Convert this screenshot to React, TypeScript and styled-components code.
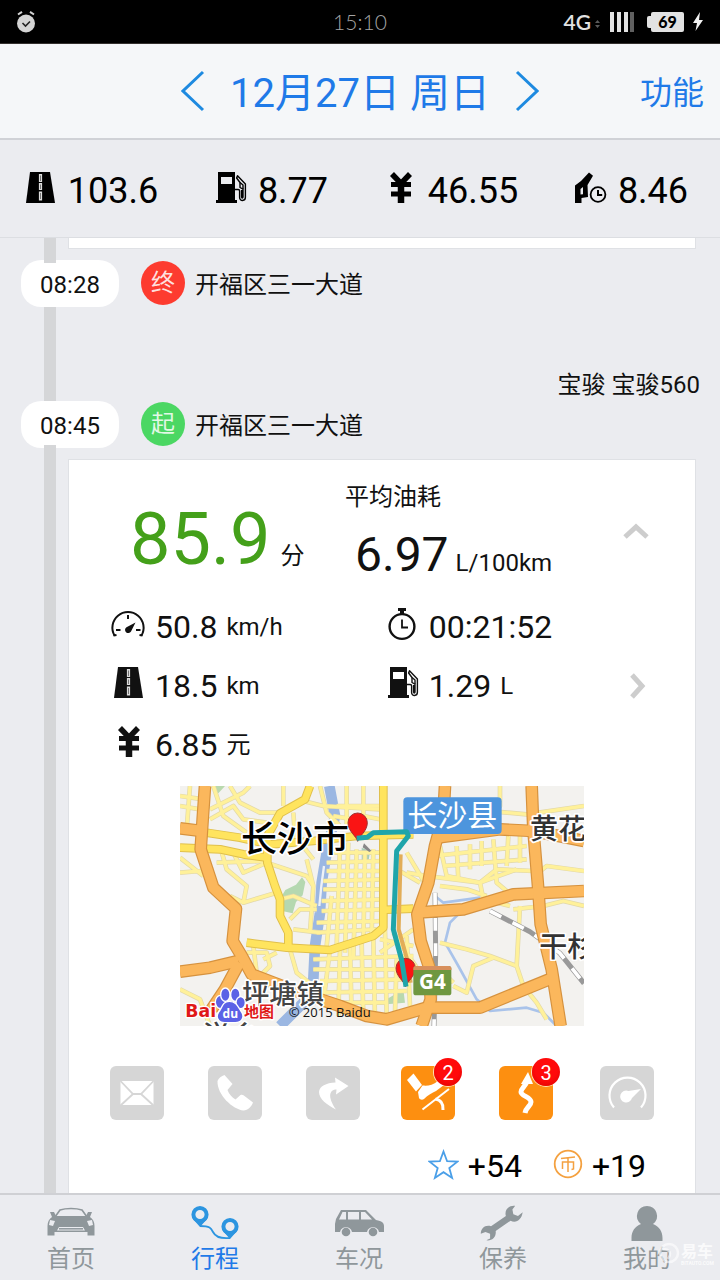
import React from "react";
import styled, { createGlobalStyle } from "styled-components";

const GlobalStyle = createGlobalStyle`
  *, *::before, *::after { box-sizing: border-box; }
  body {
    margin: 0;
    background: #ebecf0;
    color: #111;
    font-family: Roboto, "Noto Sans CJK SC", sans-serif;
    font-size: 24px;
    line-height: 28px;
  }
  button { font: inherit; color: inherit; background: none; border: 0; padding: 0; cursor: pointer; }
  a { color: inherit; text-decoration: none; }
  svg { display: block; flex: none; }
  h1, p { margin: 0; font-weight: 400; }
`;

const Page = styled.div`
  display: flex;
  flex-direction: column;
  min-height: 100vh;
`;

/* ---------- status bar ---------- */

const StatusBar = styled.div`
  display: grid;
  grid-template-columns: 1fr auto 1fr;
  align-items: center;
  height: 44px;
  padding: 0 16px;
  background: #000;
  border-bottom: 1px solid #34302e;
  color: #e2e2e2;
  font-family: Lato, sans-serif;
`;

const Clock = styled.span`
  font-size: 21px;
  font-weight: 300;
  color: #a4a4a4;
`;

const StatusIcons = styled.div`
  display: flex;
  align-items: center;
  justify-content: flex-end;
`;

const Network = styled.span`
  font-size: 21px;
  font-weight: 600;
  margin-right: 4px;
`;

const BatteryTip = styled.span`
  width: 4px;
  height: 12px;
  margin-left: 12px;
  border-radius: 2px 0 0 2px;
  background: #e2e2e2;
`;

const Battery = styled.span`
  height: 20px;
  width: 33px;
  margin-right: 8px;
  border-radius: 2px;
  background: #e2e2e2;
  color: #000;
  font-size: 16px;
  font-weight: 900;
  line-height: 20px;
  text-align: center;
`;

/* ---------- header ---------- */

const Header = styled.header`
  display: grid;
  grid-template-columns: 1fr auto 1fr;
  align-items: center;
  height: 96px;
  padding: 0 16px;
  background: #f5f7f9;
  border-bottom: 2px solid #d0d2d7;
  color: #1f7ae8;
`;

const DateNav = styled.div`
  grid-column: 2;
  display: flex;
  align-items: center;
  gap: 25px;
`;

const DateTitle = styled.h1`
  padding-top: 6px;
  font-size: 40px;
  line-height: 48px;
`;

const MenuButton = styled.button`
  justify-self: end;
  padding-top: 4px;
  font-size: 32px;
  line-height: 40px;
`;

/* ---------- day totals ---------- */

const Totals = styled.section`
  display: grid;
  grid-template-columns: repeat(4, 1fr);
  height: 98px;
  padding-top: 4px;
  border-bottom: 1px solid #dcdee2;
  color: #000;
`;

const Total = styled.div`
  display: flex;
  align-items: center;
  justify-content: center;
  gap: 10px;
  font-size: 36px;
  line-height: 40px;
`;

/* ---------- timeline ---------- */

const Timeline = styled.main`
  flex: 1;
  display: flex;
  flex-direction: column;
  background: linear-gradient(#d5d6d8, #d5d6d8) 44px 0 / 12px 100% no-repeat;
`;

const Card = styled.article`
  margin: 0 24px 0 68px;
  background: #fff;
  border: 1px solid #dfe1e5;
`;

const PreviousCard = styled(Card)`
  height: 11px;
  margin-bottom: 11px;
  border-top: 0;
`;

const TripCard = styled(Card)`
  flex: 1;
  margin-top: 11px;
  border-bottom: 0;
`;

const Stop = styled.div`
  display: flex;
  align-items: center;
  padding: 0 21px;
`;

const Time = styled.time<{ $edge: "top" | "bottom" }>`
  width: 98px;
  height: 47px;
  border-radius: 20px;
  background: linear-gradient(#d5d6d8, #d5d6d8) 23px ${(p) => p.$edge} / 12px 3px no-repeat #fff;
  line-height: 50px;
  text-align: center;
`;

const StopBadge = styled.span<{ $color: string }>`
  width: 44px;
  height: 44px;
  margin: 0 10px 2px 22px;
  border-radius: 50%;
  background: ${(p) => p.$color};
  color: #ffffffd9;
  line-height: 44px;
  text-align: center;
`;

const StopName = styled.span`
  padding-top: 2px;
`;

const CarName = styled.p`
  margin: 64px 20px 2px;
  text-align: right;
`;

/* ---------- trip card ---------- */

const Summary = styled.div`
  display: grid;
  grid-template-columns: 235fr 267fr 48px;
  height: 137px;
  padding: 0 35px 0 41px;
`;

const Score = styled.div`
  display: flex;
  align-items: baseline;
  gap: 10px;
  padding: 44px 0 0 20px;
`;

const ScoreValue = styled.strong`
  font-size: 72px;
  line-height: 72px;
  font-weight: 400;
  color: #44a01a;
`;

const Average = styled.div`
  padding-top: 23px;
`;

const AverageValue = styled.div`
  display: flex;
  align-items: baseline;
  gap: 7px;
  margin-top: 16px;
  padding-left: 10px;
`;

const AverageNumber = styled.span`
  font-size: 48px;
  line-height: 56px;
`;

const Metrics = styled.div`
  display: grid;
  grid-template-columns: 6fr 5fr 48px;
  grid-auto-rows: 59px;
  align-items: center;
  padding: 0 35px 0 41px;
`;

const Metric = styled.div<{ $column: number }>`
  grid-column: ${(p) => p.$column};
  display: flex;
  align-items: center;
  gap: 9px;
`;

const MetricText = styled.span`
  display: flex;
  align-items: center;
  gap: 9px;
`;

const MetricValue = styled.span`
  font-size: 32px;
  line-height: 40px;
`;

const ChevronButton = styled.button<{ $top?: number }>`
  grid-column: 3;
  display: grid;
  place-items: center;
  width: 48px;
  height: 48px;
  margin-top: ${(p) => p.$top ?? 0}px;
`;

const MapFrame = styled.figure`
  margin: 12px auto 0;
  width: 404px;
  max-width: 100%;
`;

const Actions = styled.div`
  display: grid;
  grid-template-columns: repeat(6, 1fr);
  justify-items: center;
  margin: 40px 19px 0;
`;

const ActionButton = styled.button<{ $alert?: boolean }>`
  position: relative;
  width: ${(p) => (p.$alert ? 60 : 54)}px;
  height: 54px;
`;

const Tile = styled.span<{ $alert?: boolean }>`
  display: grid;
  place-items: center;
  width: 54px;
  height: 54px;
  border-radius: 6px;
  background: ${(p) => (p.$alert ? "#fd8f10" : "#d6d6d6")};
`;

const Count = styled.span`
  position: absolute;
  top: -8px;
  right: -1px;
  width: 28px;
  height: 28px;
  border-radius: 50%;
  background: radial-gradient(circle at 50% 40%, #ff0a0a 50%, #d80000);
  box-shadow: 0 0 0 1px #ffffffb3;
  color: #fff;
  font-size: 20px;
  line-height: 30px;
  text-align: center;
`;

const Rewards = styled.div`
  display: flex;
  justify-content: flex-end;
  gap: 31px;
  margin: 26px 49px 0;
  color: #000;
`;

const Reward = styled.span`
  display: flex;
  align-items: center;
  gap: 9px;
  font-size: 32px;
  line-height: 40px;
`;

/* ---------- tab bar ---------- */

const TabBar = styled.nav`
  position: relative;
  display: grid;
  grid-template-columns: repeat(5, 1fr);
  height: 87px;
  border-top: 2px solid #cfd0d4;
  background: #ebecf0;
`;

const Tab = styled.a<{ $active?: boolean }>`
  display: flex;
  flex-direction: column;
  align-items: center;
  gap: 4px;
  padding: 10px 2px 0 0;
  color: ${(p) => (p.$active ? "#1f7ae8" : "#8f979b")};
`;

const Watermark = styled.div`
  position: absolute;
  right: 6px;
  bottom: 13px;
  pointer-events: none;
`;

const WatermarkText = styled.text<{ $size: number }>`
  font-size: ${(p) => p.$size}px;
  font-weight: 700;
  fill: #fffc;
`;

/* ---------- icons ---------- */

const RoadIcon = () => (
  <svg width="36" height="40" viewBox="0 0 36 40" aria-hidden="true">
    <path d="M8 1h20l5 31H4z" fill="currentColor" />
    <path d="M18.500 3v8M18.500 12v7M18.500 20.500v9" stroke="#ddd" strokeWidth="3.200" />
    <path d="M18.500 4.500v5.500M18.500 13.500v4.500M18.500 22v6" stroke="#777" strokeWidth="1" />
  </svg>
);

const FuelIcon = () => (
  <svg width="36" height="40" viewBox="0 0 36 40" aria-hidden="true">
    <path fillRule="evenodd" fill="currentColor" d="M6 1h17v28h2v3H4v-3h2zM9 6v7h11V6z" />
    <g fill="none" stroke="currentColor" strokeWidth="1.400" strokeLinejoin="round">
      <path d="M23 18.500h3.200c1 0 1.400.6 1.400 1.500v6.500c0 4 5.800 4 5.800-.2V13L25.500 4.800 24.600 7l3.400 4.500v5l3 1.600v8c0 1.400-1.400 1.400-1.400 0V19" />
      <path d="M28 11.500l3 2.500v4" />
    </g>
  </svg>
);

const YuanIcon = () => (
  <svg width="36" height="40" viewBox="0 0 36 40" aria-hidden="true">
    <g fill="none" stroke="currentColor">
      <path d="M10 3l9 9.500L28 3" strokeWidth="5.500" />
      <path d="M19 11v21" strokeWidth="6.500" />
      <path d="M9 13.500h20M9 23h20" strokeWidth="5" />
    </g>
  </svg>
);

const NozzleClockIcon = () => (
  <svg width="36" height="40" viewBox="0 0 36 40" aria-hidden="true">
    <path
      fillRule="evenodd"
      fill="currentColor"
      d="M3 32V14.500l6-4.500L17 1.500l4 3.200-5.500 9.300.5 12-6.500 1V32zM8.500 18v5.600l2.500-.4V16z"
    />
    <circle cx="26" cy="23.500" r="7.400" fill="none" stroke="currentColor" strokeWidth="1.800" />
    <path d="M26 19v5h4.200" fill="none" stroke="currentColor" strokeWidth="2" />
  </svg>
);

const SpeedIcon = () => (
  <svg width="36" height="40" viewBox="0 0 36 40" aria-hidden="true">
    <g fill="none" stroke="currentColor" strokeWidth="2">
      <path d="M4.500 28.500A15.600 15.600 0 1 1 31.500 28.500" />
      <path d="M18 8v4M6 23h4.500M26 23h4.500M3.500 28.500l3-.5M32.500 28.500l-3-.5" />
    </g>
    <path d="M25.500 15.500L21 24.500a3.200 3.200 0 1 1-4.500-4.300z" fill="currentColor" />
  </svg>
);

const StopwatchIcon = () => (
  <svg width="36" height="40" viewBox="0 0 36 40" aria-hidden="true">
    <path d="M14 1h8v3h-2v3h-4V4h-2z" fill="currentColor" />
    <circle cx="18" cy="19.500" r="12.400" fill="none" stroke="currentColor" strokeWidth="2.400" />
    <path d="M18 12.500V20.500h6" fill="none" stroke="currentColor" strokeWidth="1.800" />
  </svg>
);

const DateArrow = ({ next }: { next?: boolean }) => (
  <svg width="24" height="42" viewBox="0 0 24 42" aria-hidden="true">
    <path
      d={next ? "M2 2l20 19L2 40" : "M22 2L2 21l20 19"}
      fill="none"
      stroke="#1e8ae0"
      strokeWidth="3"
    />
  </svg>
);

const Chevron = ({ d }: { d: string }) => (
  <svg width="26" height="26" viewBox="0 0 26 26" aria-hidden="true">
    <path d={d} fill="none" stroke="#cdcdcd" strokeWidth="5" />
  </svg>
);

const AlarmIcon = () => (
  <svg width="20" height="24" viewBox="0 0 20 24" aria-hidden="true">
    <circle cx="10" cy="13.500" r="9" fill="#d4d4d4" />
    <path d="M2 4.500l4-2.700M18 4.500l-4-2.700" stroke="#d4d4d4" strokeWidth="2" />
    <path d="M6.500 13l3 3 4.500-4.500" fill="none" stroke="#222" strokeWidth="1.600" />
  </svg>
);

const SignalIcon = () => (
  <svg width="40" height="22" viewBox="0 0 40 22" aria-hidden="true">
    <path d="M0 12l2.500-3L5 12zM0 14l2.500 3L5 14z" fill="#5a5a5a" />
    <path d="M15 1h4v20h-4zM22 1h4v20h-4zM29 1h4v20h-4z" fill="#e2e2e2" />
    <path d="M35 1h4v20h-4z" fill="#606060" />
  </svg>
);

const BoltIcon = () => (
  <svg width="12" height="20" viewBox="0 0 12 20" aria-hidden="true">
    <path d="M8 0L1 11h4l-1.500 8L11 8H7z" fill="#f2f2f2" />
  </svg>
);

const actionArt: Record<string, React.ReactNode> = {
  mail: (
    <>
      <path d="M10.500 15h33v24h-33z" fill="#fff" />
      <path d="M10.500 15l12.500 13h8l12.500-13M10.500 39.500L23 28M43.500 39.500L31 28" fill="none" stroke="#d6d6d6" strokeWidth="1.800" />
    </>
  ),
  phone: (
    <path
      fill="#fff"
      d="M9.500 15c1-3 4-5 7-6l8 9-5 6c1.500 4 4.500 7.500 8 9.500l5-4.500c1-.5 2-.5 3 .2l9.500 7.300c-1.500 4-5 8-9.500 8C25 43.500 9 29 9.500 15z"
    />
  ),
  share: (
    <path
      fill="#fff"
      d="M29 11.500l13.500 8.500-12.500 8.500.5-5c-7 0-9.500 7-.5 20C21 39 13 33 13 26c.5-6 7-9 16.500-9.500z"
    />
  ),
  brake: (
    <g fill="#fff">
      <path d="M6 14l6.500-6.500L21 19l-6 6.500z" />
      <path d="M17 26l4.500-6.500c5 .5 10 0 15.500-4.500l6 4-8 6c-4 2-8 4-12 8-2 1.500-4 .5-5-1z" />
      <path d="M21.500 43.500L48 23" stroke="#fff" strokeWidth="2" />
      <path d="M34.500 33c6 1 8 4.500 7.500 11" fill="none" stroke="#fff" strokeWidth="3" />
    </g>
  ),
  swerve: (
    <>
      <path
        d="M28 15c-1 5-6 7-6 11s10 5 10 10c0 4-5 5-6 11"
        fill="none"
        stroke="#fff"
        strokeWidth="5"
      />
      <path d="M22 18l7-12 5 12z" fill="#fff" />
    </>
  ),
  gauge: (
    <>
      <path d="M14 41.500a18 18 0 1 1 27 0" fill="none" stroke="#fff" strokeWidth="2.200" />
      <path d="M41 23L32 32a6 6 0 1 1-3.500-7z" fill="#fff" />
    </>
  ),
};

const tabArt: Record<string, React.ReactNode> = {
  home: (
    <>
      <path d="M10 12l5-7c6-2 16-2 22 0l5 7" fill="none" stroke="currentColor" strokeWidth="1.600" />
      <path
        fillRule="evenodd"
        fill="currentColor"
        d="M5 7h4l2 4h30l2-4h4l-2 5c3 2 4.500 5 4.500 9v9.500h-7V27H9.500v3.500h-7V21c0-4 1.500-7 4.500-9zM5 15l-1 5 4 1 2-5zM47 15l1 5-4 1-2-5zM14 22l-2 3.500h28L38 22z"
      />
      <path d="M14 23.800h24" stroke="currentColor" strokeWidth="1.500" />
    </>
  ),
  trips: (
    <>
      <g fill="none" stroke="#2c95e0">
        <circle cx="11" cy="9.500" r="6.600" strokeWidth="4" />
        <circle cx="41" cy="21.500" r="6.600" strokeWidth="4" />
        <path d="M11 21c10 0 11 2 13 6s7 7 17 6" strokeWidth="1.800" />
      </g>
      <path d="M3.500 13.500L11 22l7.500-8.500L11 17zM33.500 25.500L41 34l7.500-8.500L41 29z" fill="#2c95e0" />
    </>
  ),
  car: (
    <>
      <path
        fillRule="evenodd"
        fill="currentColor"
        d="M8 5h25l10 10c6 1 8 3 8 6v6h-5a6.200 6.200 0 0 0-12 0H19a6.200 6.200 0 0 0-12 0H2V19l1-5zM9.500 7L6 14.500h7V7zM15 7v7.500h11V7zM28 7v7.500h11L32 7z"
      />
      <circle cx="13" cy="27" r="4.300" fill="currentColor" />
      <circle cx="40" cy="27" r="4.300" fill="currentColor" />
    </>
  ),
  service: (
    <path
      fill="currentColor"
      d="M40 2c-7-1-12 5-10 11L14 24c-6-2-11 2-11 8l5-2 5 2v5l-4 2c6 1 11-4 10-10l16-11c6 3 12-1 13-9l-5 4-5-2-1-5z"
      transform="translate(1 -1) scale(.93)"
    />
  ),
  me: (
    <path
      fill="currentColor"
      d="M26 1a10 10 0 0 1 6 18c6 2.500 9.500 7 9.500 14v3h-31v-3c0-7 3.500-11.500 9.500-14A10 10 0 0 1 26 1z"
    />
  ),
};

const StarIcon = () => (
  <svg width="31" height="34" viewBox="0 0 31 34" aria-hidden="true">
    <path
      d="M15.500 2.500l3.600 9.700 10.300.4-8.100 6.400 2.800 9.900-8.600-5.700-8.600 5.700 2.800-9.900-8.100-6.400 10.300-.4z"
      fill="none"
      stroke="#4a9fe8"
      strokeWidth="1.800"
    />
  </svg>
);

const CoinIcon = () => (
  <svg width="30" height="34" viewBox="0 0 30 34" aria-hidden="true">
    <g fill="none" stroke="#f4a140">
      <circle cx="15" cy="15" r="13.300" strokeWidth="1.800" />
      <path d="M8 9.500l14-1.500M9.500 20v-7h11v7l-2 .5M15 9v14" strokeWidth="1.500" />
    </g>
  </svg>
);

/* ---------- route map ---------- */

const highways = [
  "M75 0L68 100 62 190 100 305 168 368 158 465 185 510 215 565 280 590 360 620 480 660 560 690 620 700 740 665 900 665 1120 575",
  "M0 127L65 135",
  "M0 557L90 545 175 525",
  "M178 530L135 610 95 670",
  "M795 0L790 90 765 180 745 290 712 385 722 465 748 545 752 640 725 720",
  "M710 380L850 370 1000 325 1212 315",
  "M1055 0L1060 130 1075 312 1082 415 1115 550 1142 720",
  "M770 155L960 130 1060 135 1212 165",
];

const avenues = [
  "M390 0L375 40 300 82 262 150 262 230 285 300 300 340 300 390 325 440 325 480",
  "M200 470L320 485 450 492 580 450 610 425 610 0",
  "M80 140L180 155 270 175 400 165 530 150 700 145",
  "M0 185L120 190 190 205 262 215",
  "M600 372L700 368",
];

const streets = [
  "M0 60L60 70M90 70L190 20 210 0M90 100L160 60 190 100 260 110M30 0L20 130M100 0L130 90 200 140",
  "M0 30L70 40M150 0L180 50 240 80 300 80M0 260L60 255 100 250M0 215L70 270M110 230L250 225",
  "M120 180L140 250 200 300 190 350 290 320M160 200L190 260 260 230 380 270 400 300M190 350L150 330",
  "M310 60L310 0M370 45L430 60 600 70M340 80L345 150 400 220M420 0L440 80 480 120M500 0L500 120M550 0L550 90 600 100",
  "M470 60L610 60M460 90L520 100M460 200L610 200M440 230L610 225M440 255L610 255M430 285L620 280M430 310L620 310M425 345L620 340M425 375L620 370M410 410L615 405M410 440L590 430",
  "M480 180L470 480M505 170L495 500M530 190L520 520M555 200L550 470M580 190L575 450M455 330L440 480",
  "M330 400L360 370 410 370M340 430L420 440M300 340L340 330 410 360M380 220L400 300 390 440M330 490L350 560 400 600 390 660",
  "M200 500L260 500 270 540 240 570M220 480L230 560M250 520L290 500M400 520L700 510M400 550L700 550M420 585L690 580M410 620L680 615M400 650L620 650",
  "M450 490L430 650M480 490L475 690M510 480L515 690M545 470L550 700M580 460L585 700M615 430L620 690M650 520L645 680M680 450L690 660",
  "M0 610L60 640 90 720M600 500L700 430M640 440L720 560M600 460L700 480M680 200L740 300M650 250L720 290",
  "M780 180L800 270 900 290 1010 250M760 210L1040 180M790 240L1040 220M830 180L835 280M870 175L870 250M905 165L905 240M940 160L950 290 1010 340M985 150L980 240M1020 150L1020 230",
  "M680 260L740 270 900 290 950 250 1060 255M1075 260L1100 240 1212 255M780 300L860 310 920 330M900 290L910 340 990 360M960 0L960 60 940 90M830 60L870 70 1040 85 1212 60",
  "M780 470L860 490 930 510 1010 540 1020 360M820 600L860 620 880 540 940 515M820 590L790 560M1010 540L1030 600 1070 650 1100 700M1090 360L1150 345 1212 360M1000 370L1090 360",
];

const Pin = ({ x, y }: { x: number; y: number }) => (
  <path
    d={`M${x} ${y + 54}C${x - 4} ${y + 38} ${x - 29} ${y + 24} ${x - 29} ${y - 2}a29 29 0 1 1 58 0C${x + 29} ${y + 24} ${x + 4} ${y + 38} ${x} ${y + 54}z`}
    fill="#fa1414"
    stroke="#a03030"
    strokeWidth="3"
  />
);

const Place = styled.text<{ $size: number; $color?: string }>`
  font-family: "Noto Sans CJK SC", sans-serif;
  font-size: ${(p) => p.$size}px;
  font-weight: 500;
  fill: ${(p) => p.$color ?? "#333"};
  stroke: #fff;
  stroke-width: 10px;
  stroke-linejoin: round;
  paint-order: stroke;
`;

const MapLabel = styled.text<{ $size: number; $color: string; $bold?: boolean }>`
  font-family: "Open Sans", "Noto Sans CJK SC", sans-serif;
  font-size: ${(p) => p.$size}px;
  font-weight: ${(p) => (p.$bold ? 700 : 400)};
  fill: ${(p) => p.$color};
`;

const BrandText = styled(MapLabel)`
  font-family: "DejaVu Sans", "Noto Sans CJK SC", sans-serif;
  stroke: #fff;
  stroke-width: 8px;
  stroke-linejoin: round;
  paint-order: stroke;
`;

const RouteMap = () => (
  <svg width="100%" viewBox="0 0 1212 720" role="img" aria-label="行程路线">
    <rect width="1212" height="720" fill="#f3f2ef" />
    <path d="M316 312l32-16 18-22 10 14-8 40-20 20-10 34-28-6-8-40z" fill="#b5d8b0" />
    <path d="M95 0h40l-20 22zM620 640l50-30 5 40-55 5z" fill="#b9d9ae" />
    <path d="M545 185l25 10-5 35-20-5z" fill="#a8cdb8" />
    <g fill="none" strokeLinejoin="round">
      <path d="M448 0L465 90 440 200 425 290 420 380 405 480 400 580 370 650 300 720" stroke="#9bb7e2" strokeWidth="32" />
      <path d="M432 240L424 300 418 360" stroke="#eef2f8" strokeWidth="7" />
      <path d="M765 330L790 350 900 335M900 335L850 370 810 410 795 470 835 540 890 640 930 675 1040 665 1090 680 1130 720" stroke="#a9c3ea" strokeWidth="8" />
      {streets.map((d) => (
        <path key={d} d={d} stroke="#e2d8a8" strokeWidth="14" />
      ))}
      {streets.map((d) => (
        <path key={d} d={d} stroke="#fff19a" strokeWidth="10" />
      ))}
      {avenues.map((d) => (
        <path key={d} d={d} stroke="#e0c04c" strokeWidth="26" />
      ))}
      {avenues.map((d) => (
        <path key={d} d={d} stroke="#ffe45e" strokeWidth="20" />
      ))}
      <path d="M930 375L1050 437 1140 502 1212 592M765 320L767 500 762 720" stroke="#999" strokeWidth="15" />
      <path d="M930 375L1050 437 1140 502 1212 592M765 320L767 500 762 720" stroke="#fff" strokeWidth="11" strokeDasharray="38 38" />
      {highways.map((d) => (
        <path key={d} d={d} stroke="#d6923e" strokeWidth="38" />
      ))}
      {highways.map((d) => (
        <path key={d} d={d} stroke="#fbb75c" strokeWidth="31" />
      ))}
      <path d="M662 205L656 430 682 522 692 590" stroke="#e2ad58" strokeWidth="12" />
    </g>
    <Place $size={108} $color="#000" x="183" y="198">长沙市</Place>
    <Place $size={84} x="1050" y="158">黄花</Place>
    <Place $size={84} x="1078" y="512">干杉</Place>
    <Place $size={82} $color="#444" x="186" y="655">坪塘镇</Place>
    <Place $size={84} $color="#444" x="-16" y="780">一洋乡</Place>
    <Pin x={533} y={112} />
    <Pin x={677} y={548} />
    <path d="M552 172l22 22-6 4-20-14z" fill="#888" />
    <rect x="670" y="34" width="295" height="110" rx="12" fill="#4d95dd" />
    <MapLabel $size={90} $color="#fff" x="682" y="120">长沙县</MapLabel>
    <path
      d="M530 157L562 154 580 140 680 137 685 150 650 195 640 430 665 522 678 602"
      fill="none"
      stroke="#1fa5aa"
      strokeWidth="15"
      strokeLinejoin="round"
    />
    <rect x="700" y="540" width="114" height="88" rx="8" fill="#6f9740" />
    <path d="M708 540h98q8 0 8 8v4H700v-4q0-8 8-8z" fill="#d8905c" />
    <MapLabel $size={62} $color="#fff" $bold x="757" y="608" textAnchor="middle">G4</MapLabel>
    <BrandText $size={52} $color="#e01818" $bold x="16" y="694">Bai</BrandText>
    <g fill="#5b62e6" stroke="#fff" strokeWidth="4">
      <ellipse cx="121" cy="648" rx="15" ry="20" />
      <ellipse cx="136" cy="626" rx="14" ry="20" />
      <ellipse cx="166" cy="626" rx="14" ry="20" />
      <ellipse cx="182" cy="650" rx="14" ry="18" />
      <path d="M148 646c24 0 28 22 38 34 8 16-2 30-20 30h-32c-20 0-28-18-18-32 10-10 10-32 32-32z" />
    </g>
    <MapLabel $size={36} $color="#fff" $bold x="151" y="696" textAnchor="middle">du</MapLabel>
    <BrandText $size={45} $color="#e01818" $bold x="192" y="693">地图</BrandText>
    <MapLabel $size={39} $color="#111" x="326" y="692">© 2015 Baidu</MapLabel>
  </svg>
);

/* ---------- data ---------- */

const totals = [
  { name: "里程", value: "103.6", icon: <RoadIcon /> },
  { name: "油量", value: "8.77", icon: <FuelIcon /> },
  { name: "费用", value: "46.55", icon: <YuanIcon /> },
  { name: "油耗", value: "8.46", icon: <NozzleClockIcon /> },
];

const actions = [
  { id: "mail", label: "消息" },
  { id: "phone", label: "电话" },
  { id: "share", label: "分享" },
  { id: "brake", label: "急刹车", count: 2 },
  { id: "swerve", label: "急转弯", count: 3 },
  { id: "gauge", label: "超速" },
];

const tabs = [
  { id: "home", label: "首页" },
  { id: "trips", label: "行程" },
  { id: "car", label: "车况" },
  { id: "service", label: "保养" },
  { id: "me", label: "我的" },
];

type MetricProps = { column: number; icon: React.ReactNode; value: string; unit?: string };

const MetricItem = ({ column, icon, value, unit }: MetricProps) => (
  <Metric $column={column}>
    {icon}
    <MetricText>
      <MetricValue>{value}</MetricValue>
      {unit && <span>{unit}</span>}
    </MetricText>
  </Metric>
);

export default function App() {
  return (
    <Page>
      <GlobalStyle />
      <StatusBar>
        <AlarmIcon />
        <Clock>15:10</Clock>
        <StatusIcons>
          <Network>4G</Network>
          <SignalIcon />
          <BatteryTip />
          <Battery>69</Battery>
          <BoltIcon />
        </StatusIcons>
      </StatusBar>

      <Header>
        <DateNav>
          <button aria-label="前一天"><DateArrow /></button>
          <DateTitle>12月27日 周日</DateTitle>
          <button aria-label="后一天"><DateArrow next /></button>
        </DateNav>
        <MenuButton>功能</MenuButton>
      </Header>

      <Totals>
        {totals.map((t) => (
          <Total key={t.name} title={t.name}>
            {t.icon}
            {t.value}
          </Total>
        ))}
      </Totals>

      <Timeline>
        <PreviousCard />
        <Stop>
          <Time $edge="top">08:28</Time>
          <StopBadge $color="#fd3b2f">终</StopBadge>
          <StopName>开福区三一大道</StopName>
        </Stop>
        <CarName>宝骏 宝骏560</CarName>
        <Stop>
          <Time $edge="bottom">08:45</Time>
          <StopBadge $color="#4bd763">起</StopBadge>
          <StopName>开福区三一大道</StopName>
        </Stop>
        <TripCard>
          <Summary>
            <Score>
              <ScoreValue>85.9</ScoreValue>
              <span>分</span>
            </Score>
            <Average>
              <p>平均油耗</p>
              <AverageValue>
                <AverageNumber>6.97</AverageNumber>
                <span>L/100km</span>
              </AverageValue>
            </Average>
            <ChevronButton $top={48} aria-label="收起">
              <Chevron d="M2 18l11-10 11 10" />
            </ChevronButton>
          </Summary>
          <Metrics>
            <MetricItem column={1} icon={<SpeedIcon />} value="50.8" unit="km/h" />
            <MetricItem column={2} icon={<StopwatchIcon />} value="00:21:52" />
            <MetricItem column={1} icon={<RoadIcon />} value="18.5" unit="km" />
            <MetricItem column={2} icon={<FuelIcon />} value="1.29" unit="L" />
            <ChevronButton aria-label="查看详情">
              <Chevron d="M9 2l10 11L9 24" />
            </ChevronButton>
            <MetricItem column={1} icon={<YuanIcon />} value="6.85" unit="元" />
          </Metrics>
          <MapFrame>
            <RouteMap />
          </MapFrame>
          <Actions>
            {actions.map((a) => (
              <ActionButton key={a.id} aria-label={a.label} $alert={!!a.count}>
                <Tile $alert={!!a.count}>
                  <svg width="54" height="54" viewBox="0 0 54 54" aria-hidden="true">
                    {actionArt[a.id]}
                  </svg>
                </Tile>
                {a.count && <Count>{a.count}</Count>}
              </ActionButton>
            ))}
          </Actions>
          <Rewards>
            <Reward><StarIcon />+54</Reward>
            <Reward><CoinIcon />+19</Reward>
          </Rewards>
        </TripCard>
      </Timeline>

      <TabBar>
        {tabs.map((t) => (
          <Tab key={t.id} href={`#${t.id}`} $active={t.id === "trips"}>
            <svg width="52" height="36" viewBox="0 0 52 36" aria-hidden="true">
              {tabArt[t.id]}
            </svg>
            {t.label}
          </Tab>
        ))}
        <Watermark>
          <svg width="56" height="26" viewBox="0 0 56 26" aria-hidden="true">
            <g fill="none" stroke="#ffffff99" strokeWidth="2.500">
              <circle cx="11" cy="12" r="9" />
              <path d="M4 8c8 0 10 4 6 10" />
            </g>
            <WatermarkText x="23" y="16" $size={16}>易车</WatermarkText>
            <WatermarkText x="23" y="24" $size={5}>BITAUTO.COM</WatermarkText>
          </svg>
        </Watermark>
      </TabBar>
    </Page>
  );
}
